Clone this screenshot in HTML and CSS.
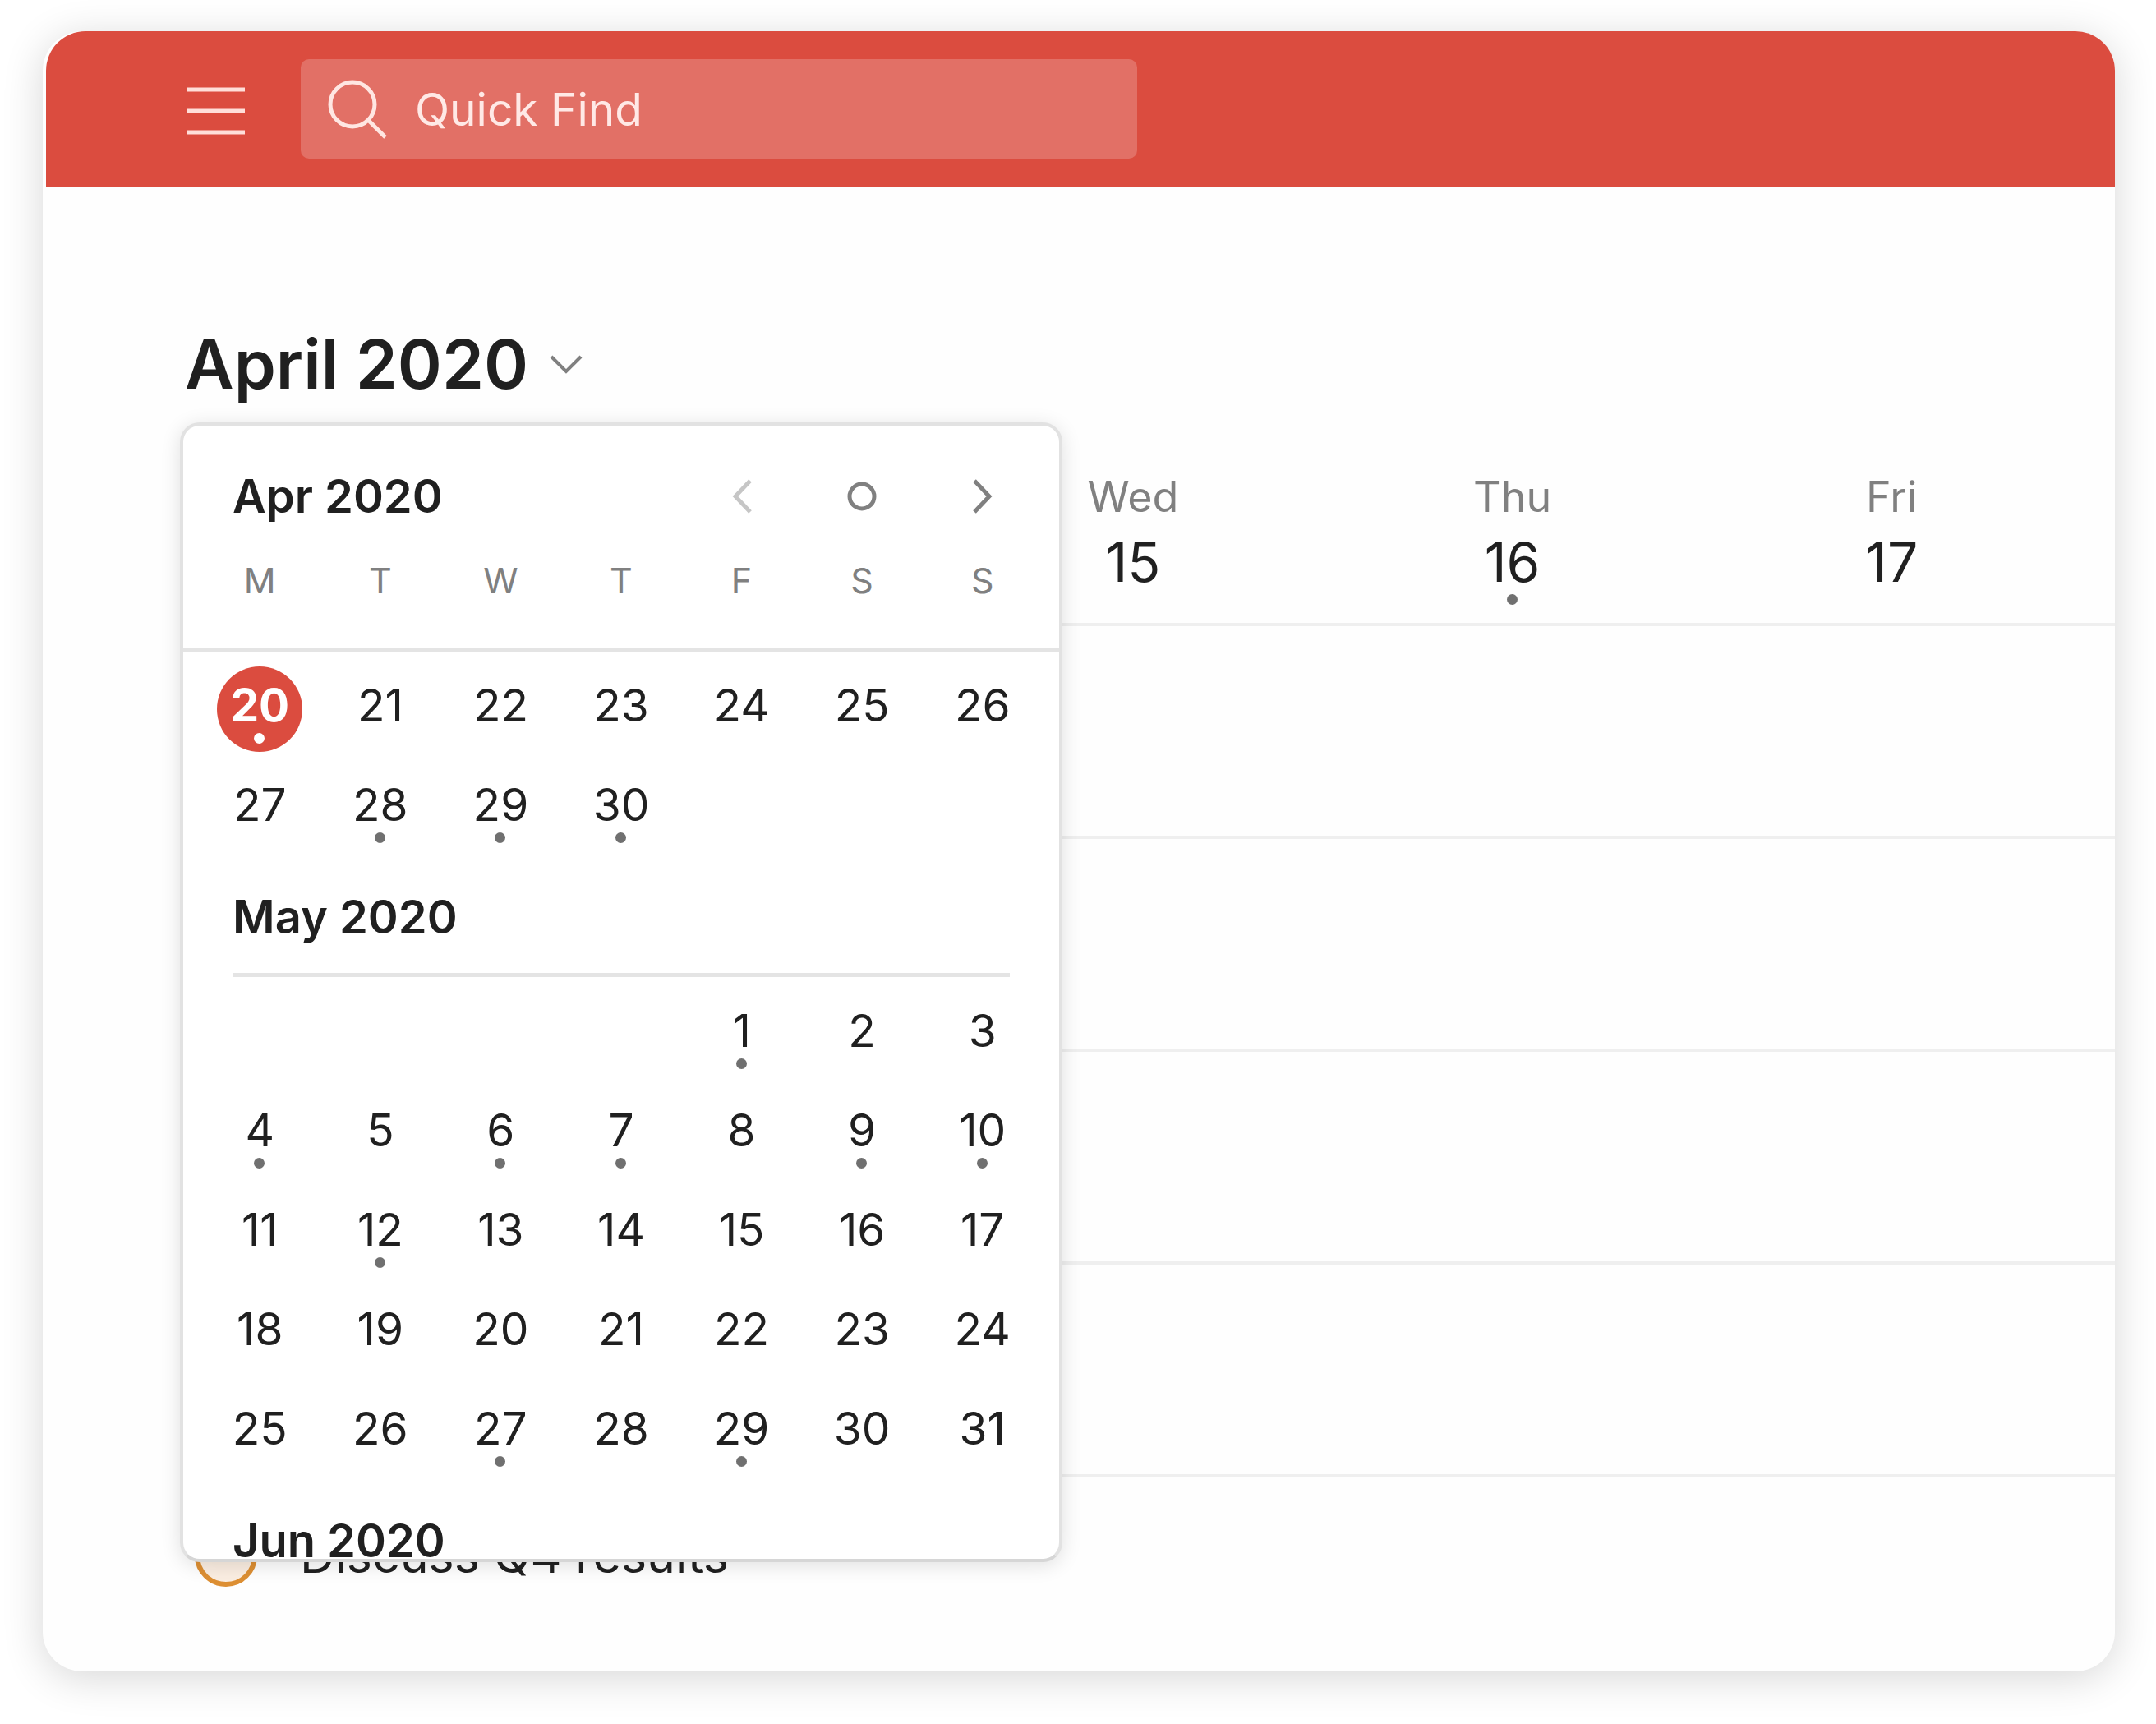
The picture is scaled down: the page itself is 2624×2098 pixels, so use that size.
FILE: index.html
```html
<!DOCTYPE html>
<html lang="en">
<head>
    <meta charset="UTF-8">
    <meta name="viewport" content="width=device-width, initial-scale=1.0">
    <title>Upcoming</title>
    <link rel="stylesheet" href="styles.css">
</head>
<body>
    <div class="app">
        <header class="topbar">
            <button class="menu-btn" type="button" aria-label="Menu">
                <svg width="70" height="58" viewBox="0 0 70 58">
                    <path d="M0 3h70M0 29h70M0 55h70" />
                </svg>
            </button>
            <label class="search">
                <svg width="72" height="72" viewBox="0 0 72 72">
                    <circle cx="30" cy="30" r="27" />
                    <path d="M49 49l21 21" />
                </svg>
                <input type="text" placeholder="Quick Find" aria-label="Quick Find">
            </label>
        </header>

        <main class="content">
            <div class="month-picker">
                <button class="month-btn" type="button">
                    April 2020
                    <svg width="40" height="24" viewBox="0 0 40 24">
                        <path d="M2 2l18 18 18-18" />
                    </svg>
                </button>

                <div class="calendar">
                    <div class="calendar-head">
                        <div class="week-row">
                            <h2 class="month-name">Apr 2020</h2>
                            <button class="nav-btn" type="button" aria-label="Previous month" disabled>
                                <svg width="40" height="44" viewBox="0 0 40 44"><path d="M30 3L12 22l18 19" /></svg>
                            </button>
                            <button class="nav-btn" type="button" aria-label="Today">
                                <svg width="40" height="44" viewBox="0 0 40 44"><circle cx="20" cy="22" r="15" /></svg>
                            </button>
                            <button class="nav-btn" type="button" aria-label="Next month">
                                <svg width="40" height="44" viewBox="0 0 40 44"><path d="M10 3l18 19-18 19" /></svg>
                            </button>
                        </div>
                        <div class="week-row weekdays">
                            <span>M</span>
                            <span>T</span>
                            <span>W</span>
                            <span>T</span>
                            <span>F</span>
                            <span>S</span>
                            <span>S</span>
                        </div>
                    </div>

                    <div class="week-row dates">
                        <button class="date today has-task">20</button>
                        <button class="date">21</button>
                        <button class="date">22</button>
                        <button class="date">23</button>
                        <button class="date">24</button>
                        <button class="date">25</button>
                        <button class="date">26</button>
                        <button class="date">27</button>
                        <button class="date has-task">28</button>
                        <button class="date has-task">29</button>
                        <button class="date has-task">30</button>
                    </div>

                    <h2 class="month-name month-divider">May 2020</h2>
                    <div class="week-row dates">
                        <button class="date has-task starts-friday">1</button>
                        <button class="date">2</button>
                        <button class="date">3</button>
                        <button class="date has-task">4</button>
                        <button class="date">5</button>
                        <button class="date has-task">6</button>
                        <button class="date has-task">7</button>
                        <button class="date">8</button>
                        <button class="date has-task">9</button>
                        <button class="date has-task">10</button>
                        <button class="date">11</button>
                        <button class="date has-task">12</button>
                        <button class="date">13</button>
                        <button class="date">14</button>
                        <button class="date">15</button>
                        <button class="date">16</button>
                        <button class="date">17</button>
                        <button class="date">18</button>
                        <button class="date">19</button>
                        <button class="date">20</button>
                        <button class="date">21</button>
                        <button class="date">22</button>
                        <button class="date">23</button>
                        <button class="date">24</button>
                        <button class="date">25</button>
                        <button class="date">26</button>
                        <button class="date has-task">27</button>
                        <button class="date">28</button>
                        <button class="date has-task">29</button>
                        <button class="date">30</button>
                        <button class="date">31</button>
                    </div>

                    <h2 class="month-name month-divider">Jun 2020</h2>
                </div>
            </div>

            <div class="days">
                <a class="day first-day" href="#"><span class="day-name">Wed</span><span class="day-number">15</span></a>
                <a class="day has-task" href="#"><span class="day-name">Thu</span><span class="day-number">16</span></a>
                <a class="day" href="#"><span class="day-name">Fri</span><span class="day-number">17</span></a>
            </div>

            <div class="slot"></div>
            <div class="slot"></div>
            <div class="slot"></div>
            <div class="slot"></div>

            <label class="task">
                <input type="checkbox">
                Discuss Q4 results
            </label>
        </main>
    </div>
</body>
</html>
```

FILE: styles.css
```css
* {
    box-sizing: border-box;
}
body {
    margin: 0;
    padding: 38px 50px 64px 52px;
    font-family: Inter, "Liberation Sans", sans-serif;
    font-size: 55px;
    color: #202020;
    background-color: #fff;
}
button {
    padding: 0;
    border: none;
    background: none;
    font: inherit;
    color: inherit;
    cursor: pointer;
}
svg {
    display: block;
    fill: none;
}
.app {
    border-radius: 48px;
    background-color: #fefefe;
    box-shadow: 0 8px 50px rgba(0, 0, 0, 0.16);
}

/* Top bar */
.topbar {
    display: flex;
    align-items: center;
    gap: 68px;
    margin-left: 4px;
    padding: 34px 172px;
    border-radius: 48px 48px 0 0;
    background-color: #db4c3f;
}
.menu-btn {
    padding-top: 4px;
}
.menu-btn svg {
    stroke: #ffded9;
    stroke-width: 5;
}
.search {
    display: flex;
    align-items: center;
    flex: 0 1 1018px;
    gap: 34px;
    min-width: 0;
    height: 121px;
    padding: 0 33px;
    border-radius: 10px;
    background-color: #e27066;
}
.search svg {
    flex: none;
    stroke: #ffe6e2;
    stroke-width: 5;
}
.search input {
    flex: 1;
    min-width: 0;
    padding: 0;
    border: none;
    outline: none;
    background: none;
    font: inherit;
    color: #fff;
}
.search input::placeholder {
    color: #ffe9e6;
    opacity: 1;
}

/* Month picker */
.content {
    padding: 167px 0 103px 173px;
}
.month-picker {
    position: relative;
}
.month-btn {
    display: flex;
    align-items: center;
    gap: 26px;
    font-size: 82px;
    font-weight: 600;
    line-height: 100px;
}
.month-btn svg {
    stroke: #808080;
    stroke-width: 4;
}
.calendar {
    position: absolute;
    top: 120px;
    left: -6px;
    z-index: 1;
    width: 1074px;
    max-height: 1387px;
    overflow: hidden;
    border: 4px solid #e2e2e2;
    border-bottom-color: #d6d6d6;
    border-radius: 24px;
    background-color: #fff;
    box-shadow: 0 4px 24px rgba(0, 0, 0, 0.12);
}
.calendar-head {
    padding: 50px 0 46px;
    border-bottom: 5px solid #e4e4e4;
}
.week-row {
    display: grid;
    grid-template-columns: repeat(7, 1fr);
    padding: 0 20px;
}
.month-name {
    grid-column: span 4;
    margin: 0;
    padding-left: 40px;
    font-size: 56px;
    font-weight: 600;
    line-height: 72px;
}
.nav-btn {
    display: flex;
    align-items: center;
    justify-content: center;
}
.nav-btn svg {
    stroke: #808080;
    stroke-width: 5;
}
.nav-btn:disabled svg {
    stroke: #c6c6c6;
}
.weekdays {
    margin-top: 30px;
    font-size: 43px;
    line-height: 72px;
    text-align: center;
    color: #808080;
}
.dates {
    padding-top: 9px;
    grid-auto-rows: 121px;
}
.date {
    position: relative;
    padding-bottom: 10px;
}
.starts-friday {
    grid-column-start: 5;
}
.has-task::after {
    content: "";
    position: absolute;
    left: 50%;
    bottom: 18px;
    width: 13px;
    height: 13px;
    margin-left: -7px;
    border-radius: 50%;
    background-color: #707070;
}
.today {
    justify-self: center;
    align-self: center;
    width: 104px;
    height: 104px;
    border-radius: 50%;
    font-weight: 700;
    color: #fff;
    background-color: #db4c3f;
}
.today::after {
    bottom: 10px;
    background-color: #fff;
}
.month-divider {
    margin: 36px 60px 0;
    padding: 0 0 32px;
    border-bottom: 5px solid #e4e4e4;
}

/* Week view */
.days {
    display: grid;
    grid-template-columns: repeat(5, 1fr);
    margin-top: 79px;
    padding-right: 41px;
}
.day {
    position: relative;
    display: flex;
    flex-direction: column;
    align-items: center;
    padding-bottom: 27px;
    text-decoration: none;
    color: inherit;
}
.first-day {
    grid-column-start: 3;
}
.day-name {
    font-size: 52px;
    line-height: 64px;
    color: #808080;
}
.day-number {
    font-size: 66px;
    line-height: 94px;
}
.day.has-task::after {
    bottom: 22px;
}
.slot {
    height: 259px;
    border-top: 4px solid #efefef;
}
.slot:last-of-type {
    border-bottom: 4px solid #efefef;
    height: 263px;
}
.task {
    display: flex;
    align-items: center;
    gap: 52px;
    margin-top: 57px;
    padding-left: 12px;
    font-size: 59px;
    line-height: 76px;
}
.task input {
    appearance: none;
    width: 76px;
    height: 76px;
    margin: 0;
    border: 6px solid #dd8f33;
    border-radius: 50%;
    background-color: #fbeee2;
}
```
